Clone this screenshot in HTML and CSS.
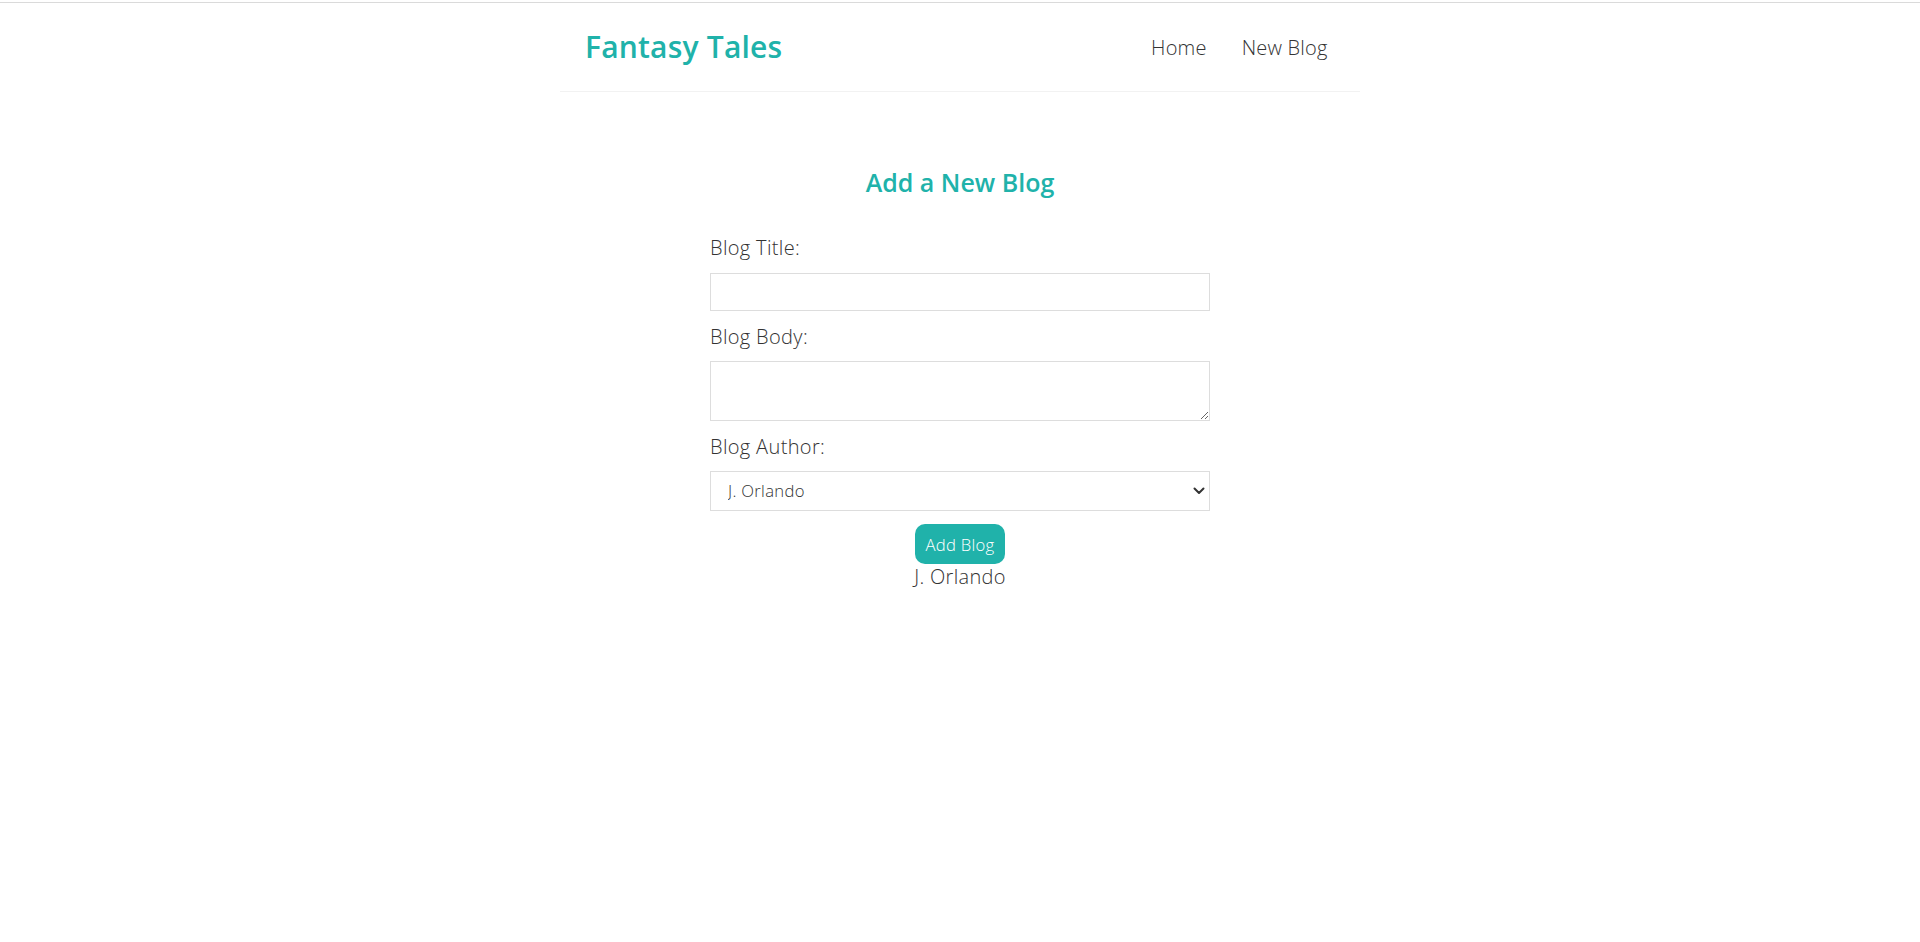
FILE: index.html
```
<!DOCTYPE html>
<html lang="en">
<head>
<meta charset="utf-8">
<title>Fantasy Tales</title>
<link rel="stylesheet" href="styles.css">
</head>
<body>
<div class="topline"></div>
<div class="app">
  <nav class="navbar">
    <h1 class="brand">Fantasy Tales</h1>
    <div class="links">
      <a href="#" class="link">Home</a>
      <a href="#" class="link">New Blog</a>
    </div>
  </nav>
  <main class="content">
    <div class="create">
      <h2 class="create-title">Add a New Blog</h2>
      <form class="create-form">
        <label class="field-label">Blog Title:</label>
        <input class="field field-input" type="text">
        <label class="field-label">Blog Body:</label>
        <textarea class="field field-area"></textarea>
        <label class="field-label">Blog Author:</label>
        <div class="select-wrap">
          <select class="field field-select">
            <option>J. Orlando</option>
            <option>M. Vance</option>
          </select>
          <svg class="chevron" width="12" height="8" viewBox="0 0 12 8" aria-hidden="true">
            <path d="M1.5 1.5 L6 6 L10.5 1.5" fill="none" stroke="#333" stroke-width="2" stroke-linecap="round" stroke-linejoin="round"/>
          </svg>
        </div>
        <button type="button" class="submit">Add Blog</button>
        <p class="preview">J. Orlando</p>
      </form>
    </div>
  </main>
</div>
</body>
</html>
```
FILE: styles.css
```
* {
  margin: 0;
  font-family: "Open Sans", "Liberation Sans", sans-serif;
  color: #333;
}

body {
  margin: 0;
  background: #fff;
}

.topline {
  margin-top: 2px;
  border-top: 1px solid #dadada;
}

.navbar {
  padding: 25px;
  display: flex;
  align-items: center;
  max-width: 750px;
  margin: 0 auto;
  border-bottom: 1px solid #f2f2f2;
}

.brand {
  font-size: 30px;
  line-height: 37.5px;
  font-weight: 600;
  letter-spacing: 0.2px;
  color: #20b2aa;
}

.links {
  margin-left: auto;
  display: flex;
  padding-top: 2px;
}

.link {
  margin-left: 20px;
  padding: 0 7.5px;
  font-size: 20px;
  line-height: 25px;
  font-weight: 300;
  letter-spacing: 0.2px;
  text-decoration: none;
}

.content {
  max-width: 750px;
  margin: 50px auto;
  padding: 25px;
}

.create {
  max-width: 500px;
  margin: 0 auto;
  text-align: center;
}

.create-title {
  font-size: 25px;
  line-height: 31.25px;
  font-weight: 600;
  color: #20b2aa;
  margin-bottom: 37.5px;
}

.field-label {
  display: block;
  text-align: left;
  font-size: 20px;
  line-height: 25px;
  font-weight: 300;
  letter-spacing: 0.35px;
}

.field {
  display: block;
  width: 100%;
  box-sizing: border-box;
  margin: 12.5px 0;
  padding: 7.5px 12.5px;
  border: 1px solid #ddd;
  border-radius: 0;
  font-size: 16.67px;
  line-height: 20.8px;
  background: #fff;
}

.field-input {
  height: 38.5px;
}

.field-area {
  height: 60px;
  resize: vertical;
}

.select-wrap {
  position: relative;
}

.field-select {
  height: 40px;
  padding: 7.5px 40px 7.5px 17px;
  font-weight: 300;
  letter-spacing: 0.3px;
  -webkit-appearance: none;
  appearance: none;
}

.chevron {
  position: absolute;
  right: 5px;
  top: 16px;
  pointer-events: none;
}

.submit {
  display: block;
  margin: 0 auto;
  height: 40.5px;
  padding: 0 10px;
  border: 0;
  border-radius: 10px;
  background: #20b2aa;
  color: #fff;
  font-size: 16.67px;
  font-weight: 300;
  letter-spacing: 0.3px;
  cursor: pointer;
}

.preview {
  font-size: 20px;
  line-height: 25px;
  font-weight: 300;
  letter-spacing: 0.3px;
}
```
